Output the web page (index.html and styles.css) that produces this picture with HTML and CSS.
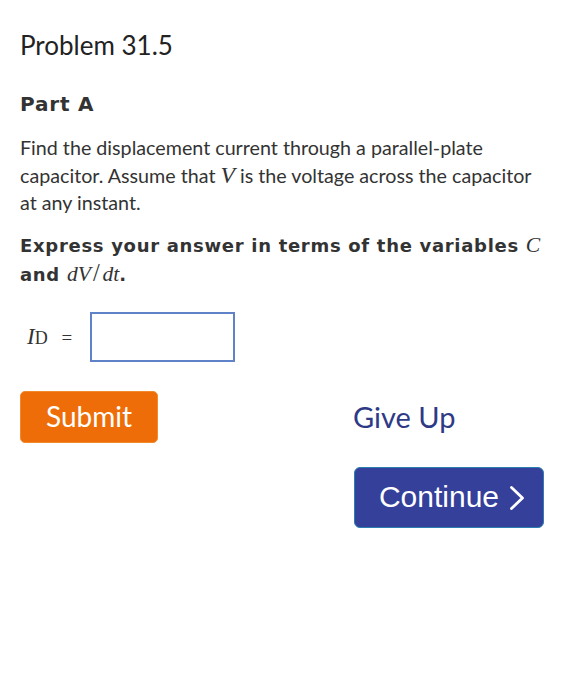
FILE: index.html
```html
<!DOCTYPE html>
<html lang="en">
<head>
    <meta charset="UTF-8">
    <meta name="viewport" content="width=device-width, initial-scale=1.0">
    <title>Problem 31.5</title>
    <link rel="stylesheet" href="styles.css">
</head>
<body>
    <div class="problem">
        <h1 class="problem-title">Problem 31.5</h1>
        <h2 class="part-title">Part A</h2>
        <p class="question">
            Find the displacement current through a parallel-plate<br>
            capacitor. Assume that <span class="math">V</span> is the voltage across the capacitor<br>
            at any instant.
        </p>
        <p class="instructions">
            Express your answer in terms of the variables <span class="math">C</span><br>
            and <span class="math">dV</span><span class="math-up">/</span><span class="math">dt</span>.
        </p>

        <div class="answer-row">
            <span class="answer-label"><span class="math">I</span><span class="sub">D</span> =</span>
            <input class="answer-input" type="text">
        </div>

        <div class="actions">
            <button class="submit-btn">Submit</button>
            <a class="give-up" href="#">Give Up</a>
        </div>

        <div class="continue-row">
            <button class="continue-btn">
                Continue
                <svg class="chevron" width="16" height="26" viewBox="0 0 16 26">
                    <polyline points="2.5,2.5 13.5,13 2.5,23.5" fill="none" stroke="#fff" stroke-width="2.8" stroke-linecap="round" stroke-linejoin="round"/>
                </svg>
            </button>
        </div>
    </div>
</body>
</html>
```

FILE: styles.css
```css
* {
    margin: 0;
    padding: 0;
    box-sizing: border-box;
}

body {
    font-family: Lato, "Open Sans", sans-serif;
    background: #fff;
    color: #333;
}

.problem {
    padding: 28px 20px 0 20px;
}

.problem-title {
    font-size: 26px;
    font-weight: 400;
    line-height: 34px;
    color: #222;
}

.part-title {
    font-family: "DejaVu Sans", sans-serif;
    font-size: 20px;
    font-weight: 700;
    letter-spacing: 0.8px;
    margin-top: 30px;
    line-height: 24px;
    color: #333;
}

.question {
    font-size: 19.7px;
    line-height: 27.5px;
    margin-top: 18px;
    white-space: nowrap;
}

.instructions {
    font-family: "DejaVu Sans", sans-serif;
    font-size: 18px;
    font-weight: 700;
    letter-spacing: 0.7px;
    line-height: 27px;
    margin-top: 15px;
    white-space: nowrap;
}

.math {
    font-family: "Liberation Serif", serif;
    font-style: italic;
    font-weight: 400;
    font-size: 1.2em;
    letter-spacing: 0;
}

.math-up {
    font-family: "Liberation Serif", serif;
    font-weight: 400;
    font-size: 1.35em;
    margin: 0 2px;
}

.answer-row {
    display: flex;
    align-items: center;
    margin-top: 24px;
}

.answer-label {
    font-family: "Liberation Serif", serif;
    font-size: 19px;
    width: 70px;
    padding-left: 7px;
}

.answer-label .math {
    font-size: 23px;
}

.sub {
    font-size: 18px;
    margin-right: 9px;
}

.answer-input {
    width: 145px;
    height: 50px;
    border: 2px solid #5f82c8;
    outline: none;
}

.actions {
    display: flex;
    align-items: center;
    margin-top: 29px;
}

.submit-btn {
    background: #ee6d08;
    color: #fff;
    border: 1px solid #f1892e;
    border-radius: 5px;
    font-family: inherit;
    font-size: 28px;
    width: 138px;
    height: 52px;
    padding-bottom: 2px;
}

.give-up {
    margin-left: 195px;
    color: #2e3a86;
    font-size: 29px;
    text-decoration: none;
}

.continue-row {
    display: flex;
    justify-content: flex-end;
    margin-top: 24px;
    padding-right: 2px;
}

.continue-btn {
    display: flex;
    align-items: center;
    justify-content: center;
    gap: 10px;
    background: #34409a;
    color: #fff;
    border: 1px solid #2a7fb0;
    border-radius: 6px;
    font-family: "Liberation Sans", Arial, sans-serif;
    font-size: 30px;
    width: 190px;
    height: 61px;
    padding-left: 6px;
}

.chevron {
    margin-top: 2px;
}
```
